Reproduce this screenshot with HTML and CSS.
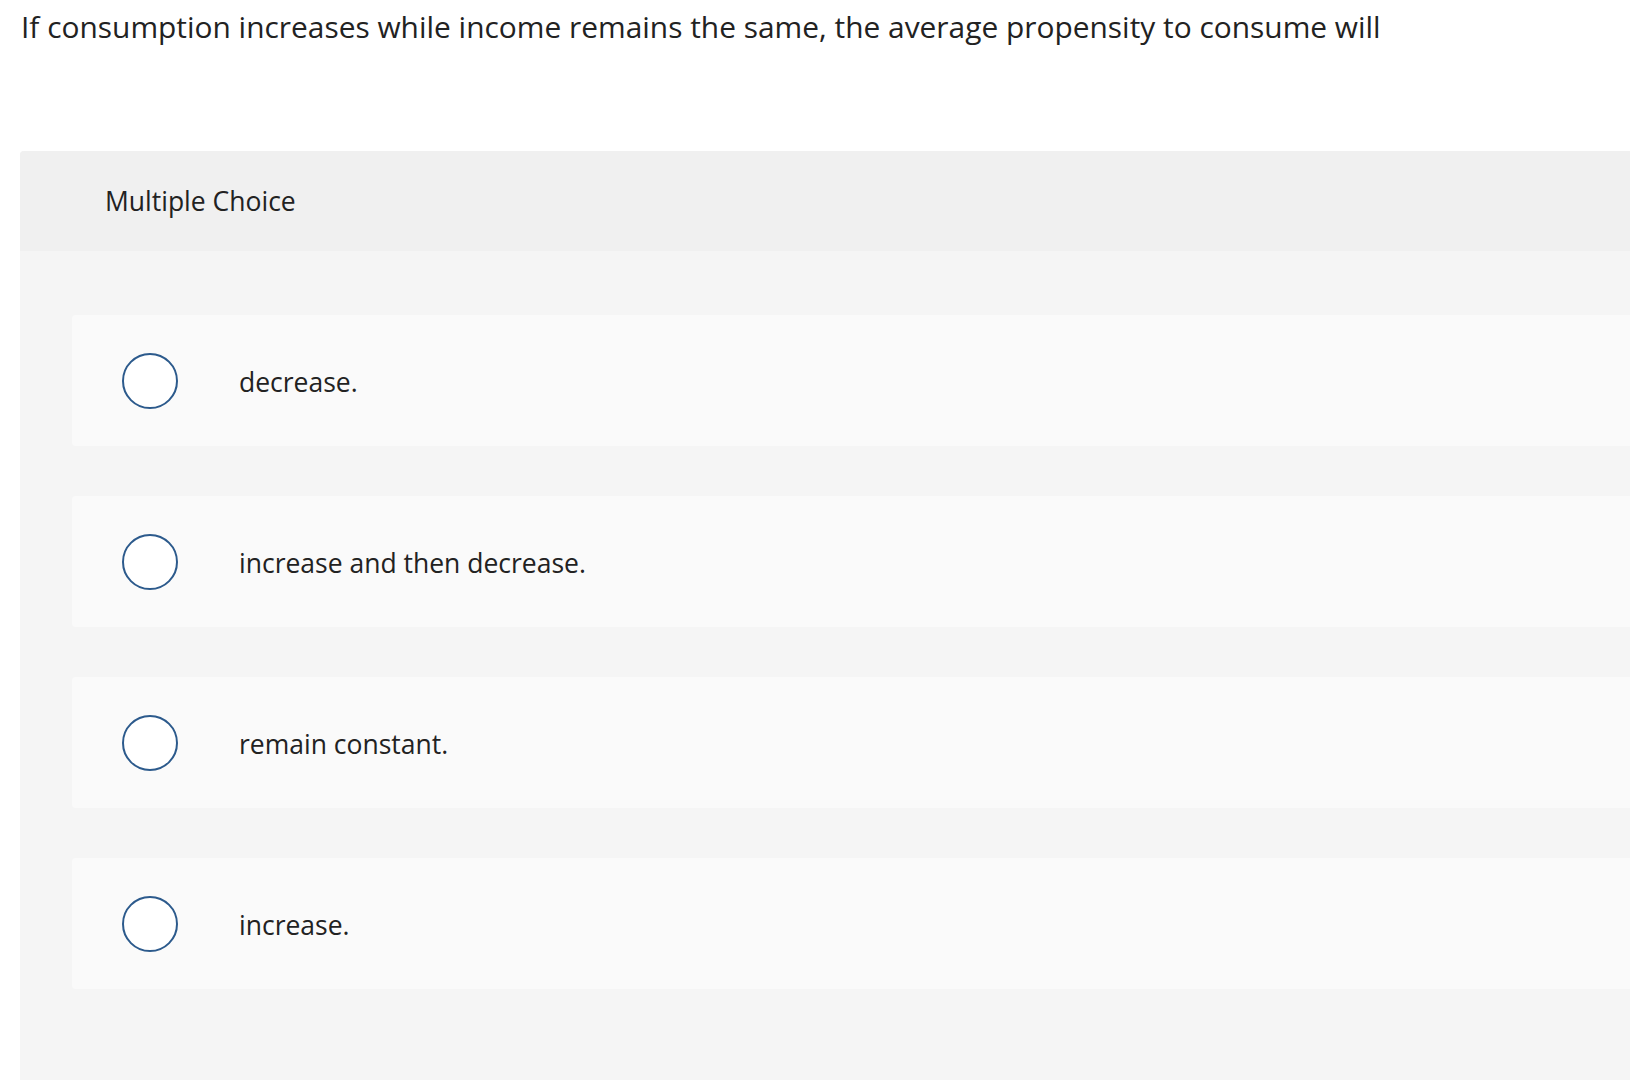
FILE: index.html
```html
<!DOCTYPE html>
<html lang="en">
<head>
<meta charset="utf-8">
<title>Multiple Choice</title>
<link rel="stylesheet" href="styles.css">
</head>
<body>
<main class="page">
  <p class="question">If consumption increases while income remains the same, the average propensity to consume will</p>
  <section class="mc">
    <header class="mc-head">Multiple Choice</header>
    <div class="mc-body">
      <label class="choice"><span class="radio"></span><span class="choice-text">decrease.</span></label>
      <label class="choice"><span class="radio"></span><span class="choice-text">increase and then decrease.</span></label>
      <label class="choice"><span class="radio"></span><span class="choice-text">remain constant.</span></label>
      <label class="choice"><span class="radio"></span><span class="choice-text">increase.</span></label>
    </div>
  </section>
</main>
</body>
</html>
```
FILE: styles.css
```css
html, body {
  margin: 0;
  padding: 0;
  background: #ffffff;
  overflow: hidden;
}
body {
  font-family: "Open Sans", "Lato", "Liberation Sans", sans-serif;
  color: #222222;
  font-variant-ligatures: none;
}
.page {
  padding: 0 0 0 20px;
  width: 1700px;
}
.question {
  margin: 0;
  padding: 7px 0 0 1px;
  font-size: 29.9px;
  line-height: 40px;
  height: 151px;
  box-sizing: border-box;
}
.mc {
  background: #f5f5f5;
  border-radius: 4px 0 0 0;
  min-height: 1000px;
}
.mc-head {
  background: #f0f0f0;
  height: 100px;
  display: flex;
  align-items: center;
  padding-left: 85px;
  font-size: 26.5px;
  border-radius: 4px 0 0 0;
}
.mc-body {
  display: flex;
  flex-direction: column;
  gap: 50px;
  padding: 64px 0 0 52px;
}
.choice {
  display: flex;
  align-items: center;
  height: 131px;
  background: #fafafa;
  border-radius: 4px 0 0 4px;
  padding-left: 50px;
}
.radio {
  width: 52px;
  height: 52px;
  border: 2px solid #2c5a8c;
  border-radius: 50%;
  background: #ffffff;
  flex: none;
}
.choice-text {
  margin-left: 61px;
  font-size: 26.5px;
  line-height: 1;
  padding-top: 4px;
}
```
